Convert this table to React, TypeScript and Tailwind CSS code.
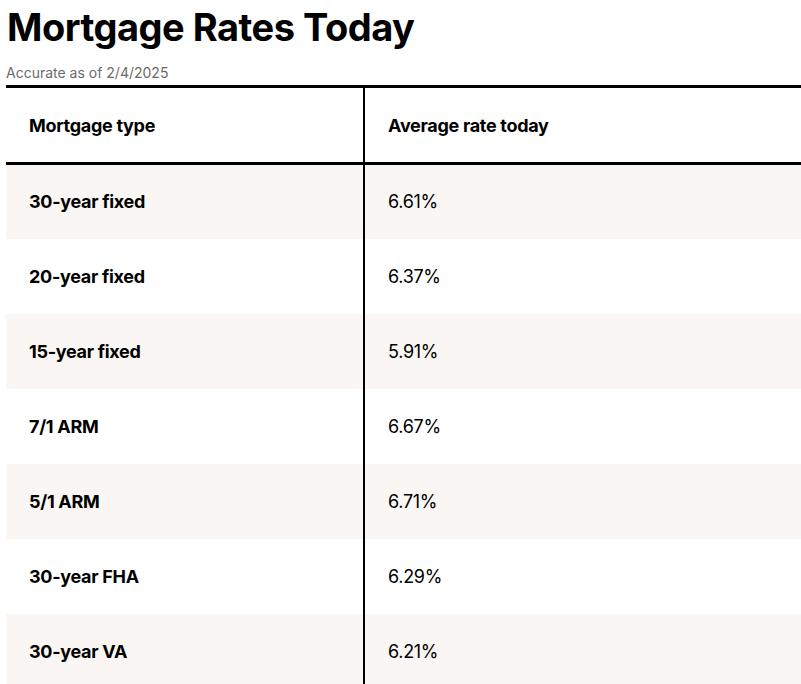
import React from "react";

const rows = [
  ["30-year fixed", "6.61%"],
  ["20-year fixed", "6.37%"],
  ["15-year fixed", "5.91%"],
  ["7/1 ARM", "6.67%"],
  ["5/1 ARM", "6.71%"],
  ["30-year FHA", "6.29%"],
  ["30-year VA", "6.21%"],
];

export default function App() {
  return (
    <div className="bg-white min-h-screen pl-[6px] text-black" style={{ fontFamily: "Inter, 'Noto Sans', sans-serif" }}>
      <h1 className="text-[38px] leading-[46px] font-bold tracking-[-0.5px] pt-[4px] pl-[1px]">Mortgage Rates Today</h1>
      <p className="text-[14px] leading-[20px] text-[#6b6b6b] mt-[13px]">Accurate as of 2/4/2025</p>
      <table className="w-[795px] border-collapse mt-[2px] border-t-[3px] border-black">
        <thead>
          <tr className="h-[77px] border-b-[3px] border-black">
            <th className="w-[358px] text-left pl-[23px] text-[18px] font-bold tracking-[-0.3px] border-r-2 border-black">Mortgage type</th>
            <th className="text-left pl-[23px] text-[18px] font-bold tracking-[-0.3px]">Average rate today</th>
          </tr>
        </thead>
        <tbody>
          {rows.map(([t, r], i) => (
            <tr key={t} className={i % 2 === 0 ? "h-[75px] bg-[#f9f6f3]" : "h-[75px] bg-white"}>
              <td className="pl-[23px] text-[18px] font-bold tracking-[-0.3px] border-r-2 border-black">{t}</td>
              <td className="pl-[23px] text-[18px] tracking-[-0.3px]">{r}</td>
            </tr>
          ))}
        </tbody>
      </table>
    </div>
  );
}
